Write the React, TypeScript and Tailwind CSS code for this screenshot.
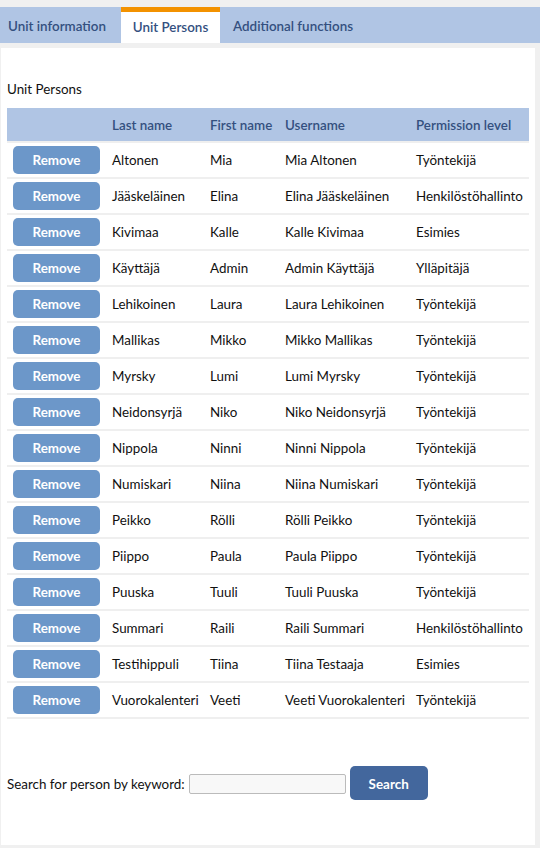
import React, { useState } from "react";

const persons = [
  ["Altonen", "Mia", "Mia Altonen", "Työntekijä"],
  ["Jääskeläinen", "Elina", "Elina Jääskeläinen", "Henkilöstöhallinto"],
  ["Kivimaa", "Kalle", "Kalle Kivimaa", "Esimies"],
  ["Käyttäjä", "Admin", "Admin Käyttäjä", "Ylläpitäjä"],
  ["Lehikoinen", "Laura", "Laura Lehikoinen", "Työntekijä"],
  ["Mallikas", "Mikko", "Mikko Mallikas", "Työntekijä"],
  ["Myrsky", "Lumi", "Lumi Myrsky", "Työntekijä"],
  ["Neidonsyrjä", "Niko", "Niko Neidonsyrjä", "Työntekijä"],
  ["Nippola", "Ninni", "Ninni Nippola", "Työntekijä"],
  ["Numiskari", "Niina", "Niina Numiskari", "Työntekijä"],
  ["Peikko", "Rölli", "Rölli Peikko", "Työntekijä"],
  ["Piippo", "Paula", "Paula Piippo", "Työntekijä"],
  ["Puuska", "Tuuli", "Tuuli Puuska", "Työntekijä"],
  ["Summari", "Raili", "Raili Summari", "Henkilöstöhallinto"],
  ["Testihippuli", "Tiina", "Tiina Testaaja", "Esimies"],
  ["Vuorokalenteri", "Veeti", "Veeti Vuorokalenteri", "Työntekijä"],
];

const cols = "grid grid-cols-[99px_98px_75px_131px_119px]";

export default function App() {
  const [keyword, setKeyword] = useState("");

  return (
    <div className="min-h-[848px] bg-[#f0f0f0] pt-[7px] text-[13.4px] text-[#111] font-['Segoe_UI','Lato',sans-serif]">
      {/* tabs */}
      <div className="flex h-[36px] bg-[#b0c5e4] font-semibold text-[#34507f]">
        <div className="w-[121px] flex items-center pl-[8px] pt-[2px] whitespace-nowrap">Unit information</div>
        <div className="w-[99px] flex items-center justify-center bg-white border-t-[5px] border-[#f39200] whitespace-nowrap">
          Unit Persons
        </div>
        <div className="flex items-center pl-[13px] pt-[2px] whitespace-nowrap">Additional functions</div>
      </div>

      <div className="mt-[5px] ml-[1px] w-[534px] h-[797px] bg-white px-[6px]">
        <div className="pt-[32px] h-[60px] leading-[18px]">Unit Persons</div>

        <div className="w-[522px]">
          <div className={`${cols} h-[33px] items-center pt-px bg-[#b0c5e4] font-semibold text-[#34507f]`}>
            <div />
            <div className="px-[6px]">Last name</div>
            <div className="px-[6px]">First name</div>
            <div className="px-[6px]">Username</div>
            <div className="px-[6px] whitespace-nowrap">Permission level</div>
          </div>
          {persons.map((p, i) => (
            <div key={i} className={`${cols} h-[36px] items-center border-t-2 border-[#efefef] whitespace-nowrap`}>
              <div className="px-[6px]">
                <button className="w-[87px] h-[28px] pt-px rounded-[5px] bg-[#6c97c9] text-white font-bold">Remove</button>
              </div>
              <div className="px-[6px] pt-px">{p[0]}</div>
              <div className="px-[6px] pt-px">{p[1]}</div>
              <div className="px-[6px] pt-px">{p[2]}</div>
              <div className="px-[6px] pt-px">{p[3]}</div>
            </div>
          ))}
          <div className="border-t-2 border-[#efefef]" />
        </div>

        <div className="mt-[47px] flex items-center gap-[4px]">
          <span className="whitespace-nowrap pt-[3px]">Search for person by keyword:</span>
          <input
            value={keyword}
            onChange={(e) => setKeyword(e.target.value)}
            className="mt-[2px] w-[157px] h-[20px] bg-[#f8f8f8] border border-[#bbbbbb] rounded-[2px] px-1 outline-none"
          />
          <button className="w-[78px] h-[34px] pt-[2px] rounded-[5px] bg-[#43679d] text-white font-bold">Search</button>
        </div>
      </div>
    </div>
  );
}
